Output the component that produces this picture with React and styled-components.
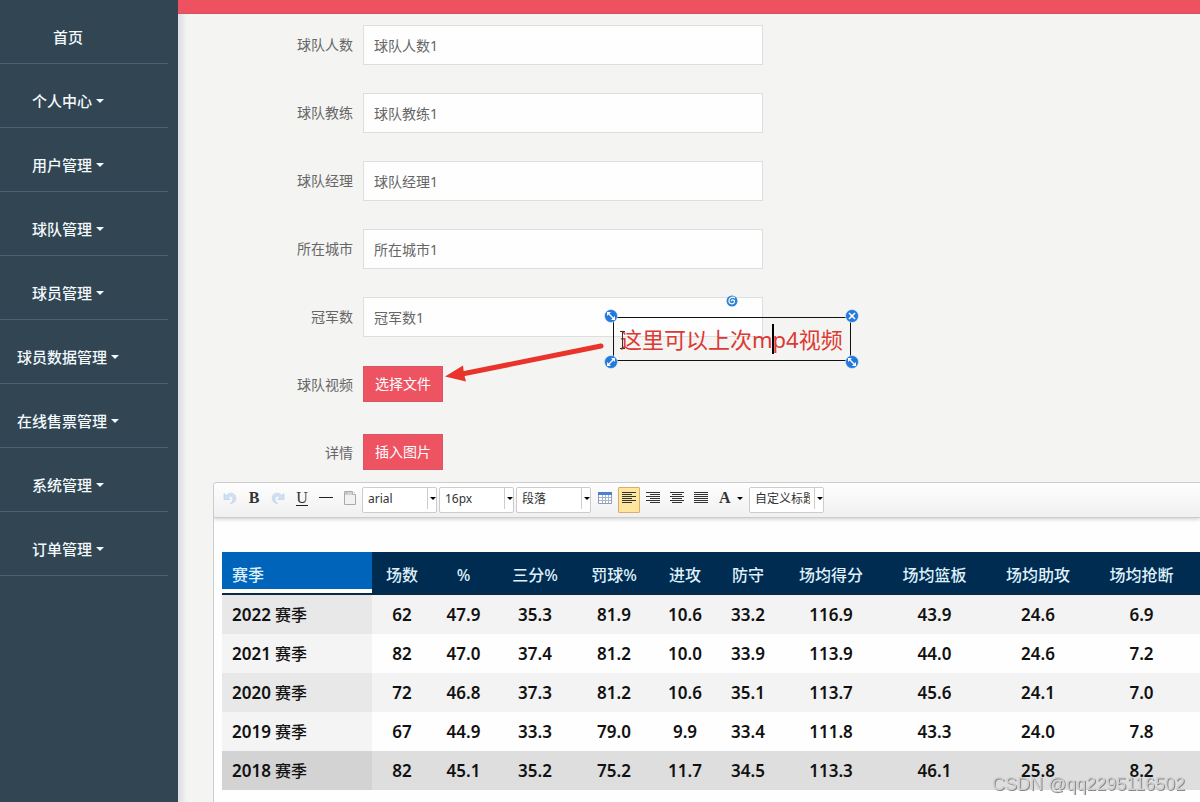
import React from 'react';
import styled, { createGlobalStyle, css } from 'styled-components';

const Global = createGlobalStyle`
  *, *::before, *::after { box-sizing: border-box; }
  html { scrollbar-width: none; }
  body {
    margin: 0;
    background: #f4f4f3;
    color: #666;
    font: 14px/20px "Noto Sans", "Noto Sans CJK SC", sans-serif;
    overflow-x: hidden;
  }
  button, input, select { font: inherit; color: inherit; margin: 0; }
`;

const Shell = styled.div`
  display: flex;
  min-height: 100vh;
`;

const Sidebar = styled.nav`
  flex: 0 0 178px;
  background: #324553;
  box-shadow: 3px 0 5px 2px #dfdfe4;
`;

const Menu = styled.ul`
  list-style: none;
  margin: 0;
  padding: 0 10px 0 0;
`;

const MenuItem = styled.li`
  height: 64px;
  padding: 10px 32px 0 0;
  border-bottom: 1px solid #4b6371;
`;

const MenuLink = styled.a`
  display: flex;
  align-items: center;
  justify-content: center;
  gap: 4px;
  height: 53px;
  color: #f3fafd;
  font-size: 15px;
  font-weight: 500;
  text-decoration: none;
  white-space: nowrap;
`;

const Caret = styled.span`
  border: 4px solid transparent;
  border-top-color: currentColor;
  border-bottom: 0;
`;

const Main = styled.main`
  position: relative;
  flex: 1;
  min-width: 0;
  display: flex;
  flex-direction: column;
`;

const TopBar = styled.header`
  height: 14px;
  background: #ee5261;
  border-bottom: 1px solid #d25363;
`;

const Form = styled.form`
  display: flex;
  flex-direction: column;
  gap: 28px;
  padding: 11px 0 9px 35px;
`;

const Field = styled.div`
  display: flex;
  align-items: center;
  gap: 10px;
  height: 40px;
`;

const Label = styled.label`
  width: 140px;
  text-align: right;
`;

const TextInput = styled.input`
  width: 400px;
  height: 40px;
  padding: 0 10px 1px;
  border: 1px solid #dedede;
  background: #fefefe;
  outline: 0;
`;

const UploadButton = styled.button`
  align-self: flex-start;
  width: 80px;
  height: 36px;
  margin-top: 1px;
  padding: 0;
  border: 1px solid #dc5465;
  background: #ee5362;
  color: #fff;
`;

const Editor = styled.section`
  flex: 1;
  margin-left: 35px;
  border: 1px solid #ccc;
  border-width: 1px 0 0 1px;
  border-radius: 4px 0 0 0;
  background: #fefefe;
  overflow: hidden;
`;

const Toolbar = styled.div`
  display: flex;
  align-items: center;
  height: 35px;
  padding: 0 0 1px 4px;
  border-bottom: 1px solid #ccc;
  background: linear-gradient(#fefefe, #f0f0f0);
  box-shadow: 0 1px 4px #ccc;
`;

const ToolButton = styled.button`
  display: grid;
  place-items: center;
  flex: none;
  width: ${p => (p.$active ? 22 : 24)}px;
  height: 26px;
  margin: 0 ${p => (p.$active ? 1 : 0)}px;
  padding: 0 0 3px;
  border: 0;
  background: none;
  ${p => p.$active && css`
    border: 1px solid #dcac6c;
    border-radius: 1px;
    background: #ffe69f;
  `}
`;

const ColorButton = styled(ToolButton)`
  display: flex;
  align-items: center;
  gap: 6px;
  width: 36px;
  padding-left: 6px;
`;

const Combo = styled.div`
  position: relative;
  flex: none;
  width: 75px;
  margin-right: 2px;
`;

const Select = styled.select`
  appearance: none;
  display: block;
  width: 100%;
  height: 26px;
  padding: 0 13px 1px 5px;
  border: 1px solid #ccc;
  border-radius: 2px;
  background: #fff;
  color: #333;
  font-size: 12px;
`;

const ComboArrow = styled.span`
  position: absolute;
  top: 1px;
  right: 0;
  display: grid;
  place-items: center;
  width: 10px;
  height: 21px;
  border-left: 1px solid #ccc;
  pointer-events: none;
`;

const Arrow = styled.span`
  border: 3px solid transparent;
  border-top-color: #000;
  border-bottom: 0;
`;

const Content = styled.div`
  padding: 34px 0 0 8px;
`;

const StatsTable = styled.table`
  width: 100%;
  table-layout: fixed;
  border-collapse: separate;
  border-spacing: 0;
  color: #111;
  text-align: center;
  white-space: nowrap;
`;

const Col = styled.col`
  width: ${p => p.$w}px;
`;

const HeadCell = styled.th`
  height: 43px;
  padding: 5px 0 0;
  border-bottom: 2px solid #0b2a47;
  background: #002c52;
  color: #dff0fa;
  font-size: 16px;
  font-weight: 500;
  &:first-child {
    padding-left: 10px;
    background: #0064bb;
    box-shadow: inset 0 -4px #fff;
    text-align: left;
  }
`;

const Row = styled.tr`
  height: 39px;
  background: #fefefe;
  & > th { background: #f4f4f4; }
  &:nth-child(odd) { background: #f3f3f3; }
  &:nth-child(odd) > th { background: #e8e8e8; }
  &:last-child { background: #dedede; }
  &:last-child > th { background: #d3d3d3; }
`;

const SeasonCell = styled.th`
  padding: 0 0 0 10px;
  font-size: 16px;
  font-weight: 500;
  text-align: left;
`;

const Year = styled.span`
  font-size: 17px;
  font-weight: 600;
`;

const Cell = styled.td`
  padding: 0;
  font-size: 17px;
  font-weight: 600;
`;

const Pointer = styled.svg`
  position: absolute;
  left: 262px;
  top: 336px;
  pointer-events: none;
`;

const Note = styled.div`
  position: absolute;
  left: 435px;
  top: 317px;
  width: 238px;
  height: 44px;
  padding: 0 6px;
  border: 1px solid #111;
  color: #dc3a32;
  font-size: 22px;
  line-height: 42px;
  white-space: nowrap;
`;

const TextCaret = styled.span`
  position: absolute;
  left: 158px;
  top: 6px;
  width: 2px;
  height: 30px;
  background: #000;
`;

const Handle = styled.svg`
  position: absolute;
  ${p => (p.$bottom ? 'bottom: -9px' : 'top: -9px')};
  ${p => (p.$right ? 'right: -9px' : 'left: -10px')};
`;

const RotateHandle = styled.svg`
  position: absolute;
  left: 112px;
  top: -23px;
`;

const IBeam = styled.svg`
  position: absolute;
  left: 5px;
  top: 13px;
`;

const Watermark = styled.div`
  position: fixed;
  right: 15px;
  bottom: 6px;
  color: #cfcfcf;
  font: 18px/24px "Liberation Sans", sans-serif;
  text-shadow: 1px 1px #8a8a8a;
  z-index: 2;
`;

const menu = ['首页', '个人中心', '用户管理', '球队管理', '球员管理', '球员数据管理', '在线售票管理', '系统管理', '订单管理'];
const fields = ['球队人数', '球队教练', '球队经理', '所在城市', '冠军数'];
const widths = [150, 60, 63, 80, 78, 64, 62, 104, 103, 104, 103];
const heads = ['赛季', '场数', '%', '三分%', '罚球%', '进攻', '防守', '场均得分', '场均篮板', '场均助攻', '场均抢断'];
const seasons = [
  ['2022', '62', '47.9', '35.3', '81.9', '10.6', '33.2', '116.9', '43.9', '24.6', '6.9'],
  ['2021', '82', '47.0', '37.4', '81.2', '10.0', '33.9', '113.9', '44.0', '24.6', '7.2'],
  ['2020', '72', '46.8', '37.3', '81.2', '10.6', '35.1', '113.7', '45.6', '24.1', '7.0'],
  ['2019', '67', '44.9', '33.3', '79.0', '9.9', '33.4', '111.8', '43.3', '24.0', '7.8'],
  ['2018', '82', '45.1', '35.2', '75.2', '11.7', '34.5', '113.3', '46.1', '25.8', '8.2'],
];

const Glyph = styled.span`
  color: #333;
  font: ${p => (p.$light ? 500 : 700)} 16px/16px "Liberation Serif", serif;
  ${p => p.$underline && 'border-bottom: 1px solid #222; line-height: 14px;'}
`;

const UndoIcon = ({ flip }) => (
  <svg width="14" height="14" viewBox="0 0 14 14" aria-hidden="true">
    <g transform={flip ? 'matrix(-1 0 0 1 14 0)' : undefined}>
      <path d="M1 2.500v6h6L5 6.300C7.500 4.200 10 5 10 8c0 2-.8 3.300-2.500 4.500C11 12 13 10 12.700 6.500 12.300 2 7 .500 3.200 4.500z" fill="#cfe1f2" stroke="#b3cfe8" strokeWidth=".6" />
    </g>
  </svg>
);

const PageIcon = () => (
  <svg width="14" height="16" viewBox="0 0 14 16" aria-hidden="true">
    <path d="M1.500 1.500h8l3 3v10h-11z" fill="#f1f1f1" stroke="#a9a9a9" />
    <path d="M2 2h10v3H2z" fill="#d2d2d2" />
    <path d="M9.500 1.500v3h3M3.500 1.500v2h-2" fill="#fff" stroke="#b0b0b0" />
  </svg>
);

const TableIcon = () => (
  <svg width="14" height="14" viewBox="0 0 14 14" aria-hidden="true">
    <path d="M.5 1.500h13v11H.5z" fill="#fff" stroke="#8c9fb8" />
    <path d="M0 1h14v3H0z" fill="#4d7fd0" />
    <path d="M1 6.500h12M1 9.500h12M4.500 4v8M7.500 4v8M10.500 4v8" stroke="#a6b5c8" />
  </svg>
);

const lineSets = {
  left: [0, 10],
  right: [4, 14],
  center: [2, 12],
  justify: [0, 14],
};

const AlignIcon = ({ kind }) => {
  const [a, b] = lineSets[kind];
  return (
    <svg width="14" height="12" viewBox="0 0 14 12" aria-hidden="true">
      <path d={`M0 .5h14M${a} 2.500H${b}M0 4.500h14M${a} 6.500H${b}M0 8.500h14M${a} 10.500H${b}`} stroke="#333" />
    </svg>
  );
};

const CornerHandle = ({ kind, ...pos }) => (
  <Handle width="14" height="14" viewBox="0 0 14 14" aria-hidden="true" {...pos}>
    <circle cx="7" cy="7" r="6.500" fill="#2479dc" stroke="#e8f1fb" strokeWidth=".6" />
    {kind === 'close' && <path d="M4 4l6 6M10 4l-6 6" stroke="#fff" strokeWidth="1.700" />}
    {kind !== 'close' && (
      <g transform={kind === 'rise' ? 'matrix(-1 0 0 1 14 0)' : undefined} fill="#fff">
        <path d="M3 3h4L3 7zM11 11H7l4-4z" />
        <path d="M4 4l6 6" stroke="#fff" strokeWidth="1.300" />
      </g>
    )}
  </Handle>
);

const ComboBox = ({ label, value }) => (
  <Combo>
    <Select aria-label={label} defaultValue={value}>
      <option>{value}</option>
    </Select>
    <ComboArrow><Arrow /></ComboArrow>
  </Combo>
);

export default function App() {
  return (
    <Shell>
      <Global />
      <Sidebar>
        <Menu>
          {menu.map((name, i) => (
            <MenuItem key={name}>
              <MenuLink href="#">{name}{i > 0 && <Caret />}</MenuLink>
            </MenuItem>
          ))}
        </Menu>
      </Sidebar>
      <Main>
        <TopBar />
        <Form>
          {fields.map((name, i) => (
            <Field key={name}>
              <Label htmlFor={`field${i}`}>{name}</Label>
              <TextInput id={`field${i}`} defaultValue={`${name}1`} />
            </Field>
          ))}
          <Field>
            <Label htmlFor="video">球队视频</Label>
            <UploadButton id="video" type="button">选择文件</UploadButton>
          </Field>
          <Field>
            <Label htmlFor="picture">详情</Label>
            <UploadButton id="picture" type="button">插入图片</UploadButton>
          </Field>
        </Form>
        <Editor>
          <Toolbar>
            <ToolButton aria-label="撤销"><UndoIcon /></ToolButton>
            <ToolButton aria-label="加粗"><Glyph>B</Glyph></ToolButton>
            <ToolButton aria-label="重做"><UndoIcon flip /></ToolButton>
            <ToolButton aria-label="下划线"><Glyph $light $underline>U</Glyph></ToolButton>
            <ToolButton aria-label="分隔线">
              <svg width="14" height="2" aria-hidden="true"><path d="M0 .5h14" stroke="#222" /></svg>
            </ToolButton>
            <ToolButton aria-label="清空文档"><PageIcon /></ToolButton>
            <ComboBox label="字体" value="arial" />
            <ComboBox label="字号" value="16px" />
            <ComboBox label="段落格式" value="段落" />
            <ToolButton aria-label="插入表格"><TableIcon /></ToolButton>
            <ToolButton aria-label="居左对齐" $active><AlignIcon kind="left" /></ToolButton>
            <ToolButton aria-label="居右对齐"><AlignIcon kind="right" /></ToolButton>
            <ToolButton aria-label="居中对齐"><AlignIcon kind="center" /></ToolButton>
            <ToolButton aria-label="两端对齐"><AlignIcon kind="justify" /></ToolButton>
            <ColorButton aria-label="字体颜色"><Glyph>A</Glyph><Arrow /></ColorButton>
            <ComboBox label="自定义标题" value="自定义标题" />
          </Toolbar>
          <Content>
            <StatsTable>
              <colgroup>
                {widths.map((w, i) => <Col key={i} $w={w} />)}
                <col />
              </colgroup>
              <thead>
                <tr>
                  {heads.map(h => <HeadCell key={h} scope="col">{h}</HeadCell>)}
                  <HeadCell as="td" />
                </tr>
              </thead>
              <tbody>
                {seasons.map(([year, ...stats]) => (
                  <Row key={year}>
                    <SeasonCell scope="row"><Year>{year}</Year> 赛季</SeasonCell>
                    {stats.map((s, i) => <Cell key={i}>{s}</Cell>)}
                    <Cell />
                  </Row>
                ))}
              </tbody>
            </StatsTable>
          </Content>
        </Editor>
        <Pointer width="170" height="54" viewBox="0 0 170 54" aria-hidden="true">
          <path d="M161 10L22 38" stroke="#e9342b" strokeWidth="5" strokeLinecap="round" />
          <path d="M5 40.500L23 29.500 24 38 26 45.500z" fill="#e9342b" />
        </Pointer>
        <Note>
          这里可以上次mp4视频
          <TextCaret />
          <IBeam width="7" height="18" viewBox="0 0 7 18" aria-hidden="true">
            <path d="M1 .5h2l.5 1 .5-1h2M3.500 1v16M1 17.500h2l.5-1 .5 1h2" fill="none" stroke="#333" />
          </IBeam>
          <RotateHandle width="12" height="12" viewBox="0 0 12 12" aria-hidden="true">
            <circle cx="6" cy="6" r="5.500" fill="#2b83d3" />
            <path d="M9 3C6 1 2.500 3 3 6.500c.5 3 5 3 5.500.3C8.800 4.500 5.500 4 5.300 6.300" fill="none" stroke="#fff" strokeWidth="1.200" />
          </RotateHandle>
          <CornerHandle kind="fall" />
          <CornerHandle kind="close" $right />
          <CornerHandle kind="rise" $bottom />
          <CornerHandle kind="fall" $bottom $right />
        </Note>
      </Main>
      <Watermark>CSDN @qq2295116502</Watermark>
    </Shell>
  );
}
